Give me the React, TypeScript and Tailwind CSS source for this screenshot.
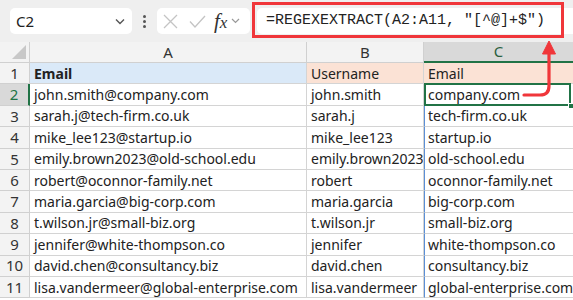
import React from "react";

const rows: [string, string, string][] = [
  ["john.smith@company.com", "john.smith", "company.com"],
  ["sarah.j@tech-firm.co.uk", "sarah.j", "tech-firm.co.uk"],
  ["mike_lee123@startup.io", "mike_lee123", "startup.io"],
  ["emily.brown2023@old-school.edu", "emily.brown2023", "old-school.edu"],
  ["robert@oconnor-family.net", "robert", "oconnor-family.net"],
  ["maria.garcia@big-corp.com", "maria.garcia", "big-corp.com"],
  ["t.wilson.jr@small-biz.org", "t.wilson.jr", "small-biz.org"],
  ["jennifer@white-thompson.co", "jennifer", "white-thompson.co"],
  ["david.chen@consultancy.biz", "david.chen", "consultancy.biz"],
  ["lisa.vandermeer@global-enterprise.com", "lisa.vandermeer", "global-enterprise.com"],
];

const font = { fontFamily: '"Noto Sans", "Open Sans", sans-serif' };

export default function App() {
  return (
    <div className="relative w-[573px] h-[300px] overflow-hidden bg-white text-[#222]" style={font}>
      {/* toolbar */}
      <div className="h-[42px] bg-[#efefef] flex items-center">
        <div className="ml-[10px] w-[122px] h-[26px] bg-white rounded-[5px] flex items-center justify-between pl-[6px] pr-[7px]">
          <span className="text-[15px] text-[#222]">C2</span>
          <svg width="10" height="7" viewBox="0 0 10 7"><path d="M1 1.5 L5 5.5 L9 1.5" fill="none" stroke="#555" strokeWidth="1.4" /></svg>
        </div>
        <div className="w-[25px] flex flex-col items-center gap-[2px]">
          <span className="w-[3px] h-[3px] rounded-full bg-[#555]" />
          <span className="w-[3px] h-[3px] rounded-full bg-[#555]" />
          <span className="w-[3px] h-[3px] rounded-full bg-[#555]" />
        </div>
        <div className="w-[93px] h-[26px] bg-white rounded-[5px] flex items-center pl-[6px]">
          <svg width="15" height="15" viewBox="0 0 15 15"><path d="M1 1 L14 14 M14 1 L1 14" stroke="#c4c4c4" strokeWidth="1.3" /></svg>
          <svg className="ml-[11px]" width="17" height="13" viewBox="0 0 17 13"><path d="M1 6.5 L6 12 L16 1" fill="none" stroke="#c4c4c4" strokeWidth="1.3" /></svg>
          <span className="ml-[8px] text-[21px] italic text-[#333] leading-none" style={{ fontFamily: '"Liberation Serif", serif' }}>
            f<span className="text-[17px]">x</span>
          </span>
          <svg className="ml-[4px]" width="9" height="6" viewBox="0 0 9 6"><path d="M1 1 L4.5 4.5 L8 1" fill="none" stroke="#999" strokeWidth="1.2" /></svg>
        </div>
        <div className="ml-[7px] flex-1 h-[26px] bg-white rounded-l-[5px] flex items-center pl-[9px]">
          <span className="text-[15px] text-[#222] whitespace-pre" style={{ fontFamily: '"Liberation Mono", monospace' }}>
            =REGEXEXTRACT(A2:A11, "[^@]+$")
          </span>
        </div>
      </div>

      {/* grid */}
      <div
        className="grid text-[14px]"
        style={{ gridTemplateColumns: "30px 277px 117px 1fr", gridTemplateRows: "21px repeat(11, 21.4px)" }}
      >
        {/* header row */}
        <div className="bg-[#f3f3f3] border-r border-b border-[#d0d0d0] relative">
          <svg className="absolute right-[3px] bottom-[3px]" width="14" height="14" viewBox="0 0 14 14"><path d="M14 0 L14 14 L0 14 Z" fill="#c8c8c8" /></svg>
        </div>
        <div className="bg-[#f3f3f3] border-r border-b border-[#d0d0d0] flex items-center justify-center text-[15px] text-[#333]">A</div>
        <div className="bg-[#f3f3f3] border-r border-b border-[#d0d0d0] flex items-center justify-center text-[15px] text-[#333]">B</div>
        <div className="bg-[#d9d9d9] border-b-2 border-[#217346] flex items-center justify-center text-[15px] text-[#2b5f3e]">C</div>

        {/* row 1 */}
        <div className="bg-[#f3f3f3] border-r border-b border-[#d0d0d0] flex items-center justify-center text-[15px] text-[#333]">1</div>
        <div className="bg-[#dae9f8] border-r border-b border-[#d4d4d4] flex items-center pl-[4px] font-bold">Email</div>
        <div className="bg-[#fbe2d5] border-r border-b border-[#d4d4d4] flex items-center pl-[4px]">Username</div>
        <div className="bg-[#fbe2d5] border-b border-[#d4d4d4] flex items-center pl-[4px]">Email</div>

        {rows.map((r, i) => {
          const sel = i === 0;
          return (
            <React.Fragment key={i}>
              <div
                className={
                  sel
                    ? "bg-[#d9d9d9] border-r-2 border-r-[#217346] border-b border-b-[#d0d0d0] flex items-center justify-center text-[15px] text-[#217346]"
                    : "bg-[#f3f3f3] border-r border-b border-[#d0d0d0] flex items-center justify-center text-[15px] text-[#333]"
                }
              >
                {i + 2}
              </div>
              <div className="border-r border-b border-[#d4d4d4] flex items-center pl-[4px] whitespace-nowrap overflow-hidden">{r[0]}</div>
              <div className="border-r border-b border-[#d4d4d4] flex items-center pl-[4px] whitespace-nowrap overflow-hidden">{r[1]}</div>
              <div className="border-l border-l-[#5b8fd6] border-b border-b-[#d4d4d4] flex items-center pl-[3px] whitespace-nowrap overflow-hidden">{r[2]}</div>
            </React.Fragment>
          );
        })}
      </div>

      {/* selection C2 */}
      <div className="absolute left-[424px] top-[83px] w-[147px] h-[23px] border-2 border-[#217346]" />
      <div className="absolute left-[568px] top-[103px] w-[6px] h-[6px] bg-[#217346] border border-white" />

      {/* red annotation box */}
      <div className="absolute left-[252px] top-[2px] w-[312px] h-[36px] border-[3px] border-[#f0363a]" />

      {/* red arrow */}
      <svg className="absolute left-0 top-0 pointer-events-none" width="573" height="300" viewBox="0 0 573 300">
        <path d="M524 95 L540 95 Q549 95 549 86 L549 52" fill="none" stroke="#f0363a" strokeWidth="3.2" strokeLinecap="round" />
        <path d="M549 41 L542.5 54 L555.5 54 Z" fill="#f0363a" stroke="#f0363a" strokeWidth="1" strokeLinejoin="round" />
      </svg>
    </div>
  );
}
